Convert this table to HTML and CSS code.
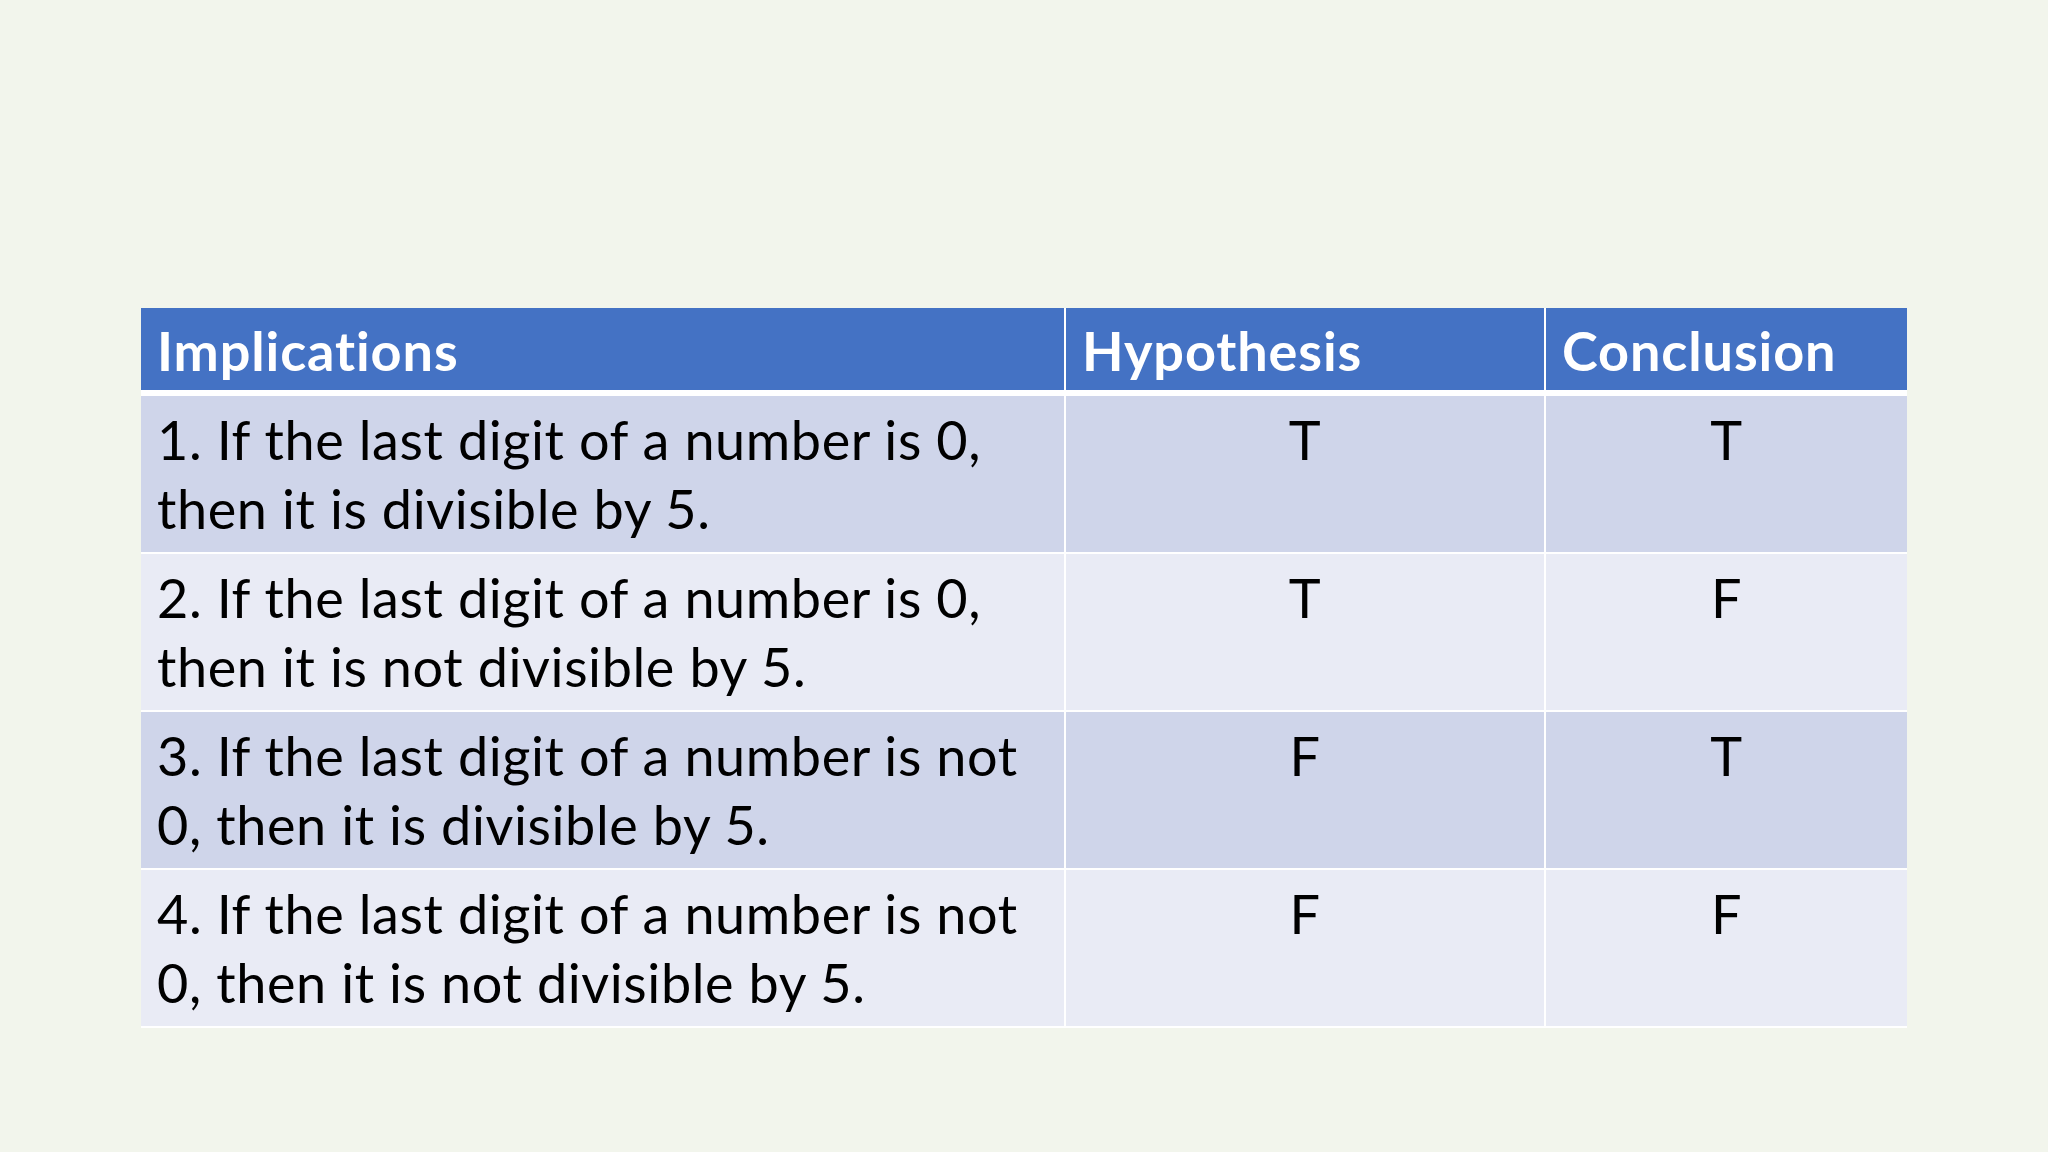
FILE: index.html
```html
<!DOCTYPE html>
<html>
<head>
<meta charset="utf-8">
<link rel="stylesheet" href="styles.css">
</head>
<body>
<div class="slide">
  <table class="truth">
    <colgroup>
      <col class="c1"><col class="c2"><col class="c3">
    </colgroup>
    <thead>
      <tr>
        <th>Implications</th>
        <th>Hypothesis</th>
        <th>Conclusion</th>
      </tr>
    </thead>
    <tbody>
      <tr class="odd">
        <td class="impl">1. If the last digit of a number is 0,<br>then it is divisible by 5.</td>
        <td class="val">T</td>
        <td class="val">T</td>
      </tr>
      <tr class="even">
        <td class="impl">2. If the last digit of a number is 0,<br>then it is not divisible by 5.</td>
        <td class="val">T</td>
        <td class="val">F</td>
      </tr>
      <tr class="odd">
        <td class="impl">3. If the last digit of a number is not<br>0, then it is divisible by 5.</td>
        <td class="val">F</td>
        <td class="val">T</td>
      </tr>
      <tr class="even">
        <td class="impl">4. If the last digit of a number is not<br>0, then it is not divisible by 5.</td>
        <td class="val">F</td>
        <td class="val">F</td>
      </tr>
    </tbody>
  </table>
</div>
</body>
</html>
```
FILE: styles.css
```css
html, body {
  margin: 0;
  padding: 0;
  background: #f2f5ec;
}
.slide {
  width: 2048px;
  height: 1152px;
  padding-top: 308px;
  padding-left: 141px;
  box-sizing: border-box;
}
.truth {
  border-collapse: separate;
  border-spacing: 0;
  table-layout: fixed;
  width: 1766px;
  font-family: Lato, "Open Sans", sans-serif;
  font-size: 54px;
  letter-spacing: 0.6px;
  color: #000;
}
.c1 { width: 925px; }
.c2 { width: 480px; }
.c3 { width: 361px; }
.truth th {
  background: #4472c4;
  color: #fff;
  font-weight: bold;
  letter-spacing: 0.9px;
  text-align: left;
  height: 82px;
  padding: 3px 16px 0;
  box-sizing: border-box;
  border-bottom: 6px solid #fff;
  border-right: 2px solid #fff;
  line-height: 79px;
  vertical-align: middle;
}
.truth th:last-child,
.truth td:last-child { border-right: none; }
.truth td {
  height: 158px;
  box-sizing: border-box;
  padding: 9px 16px 0;
  vertical-align: top;
  line-height: 69px;
  border-right: 2px solid #fff;
  border-bottom: 2px solid #fff;
  font-weight: normal;
}
.truth td.val { text-align: center; }
.odd td { background: #cfd5ea; }
.even td { background: #e9ebf5; }
```
